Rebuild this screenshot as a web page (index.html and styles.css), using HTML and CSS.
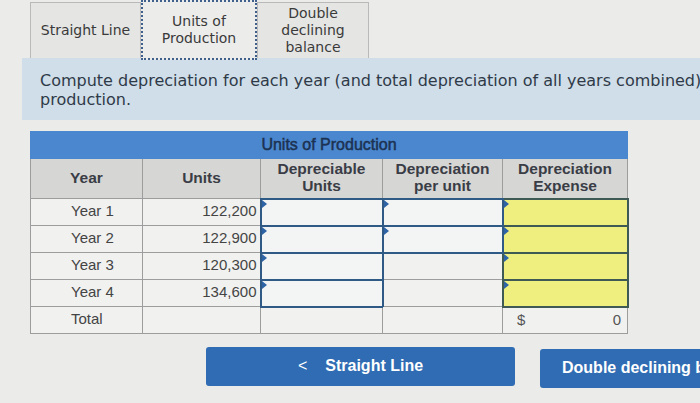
FILE: index.html
```html
<!DOCTYPE html>
<html>
<head>
<meta charset="utf-8">
<link rel="stylesheet" href="styles.css">
</head>
<body>
<div class="tabs">
  <div class="tab">Straight Line</div>
  <div class="tab active">Units of<br>Production</div>
  <div class="tab">Double<br>declining<br>balance</div>
</div>
<div class="info">Compute depreciation for each year (and total depreciation of all years combined) for units of<br>production.</div>
<table class="grid">
  <colgroup>
    <col class="c1"><col class="c2"><col class="c3"><col class="c4"><col class="c5">
  </colgroup>
  <tr class="title"><th colspan="5">Units of Production</th></tr>
  <tr class="head">
    <th>Year</th><th>Units</th><th>Depreciable<br>Units</th><th>Depreciation<br>per unit</th><th>Depreciation<br>Expense</th>
  </tr>
  <tr>
    <td class="lbl">Year 1</td><td class="num">122,200</td>
    <td class="inp"><span class="mk"></span></td><td class="inp"><span class="mk"></span></td><td class="yel"><span class="mk"></span></td>
  </tr>
  <tr>
    <td class="lbl">Year 2</td><td class="num">122,900</td>
    <td class="inp"><span class="mk"></span></td><td class="inp"><span class="mk"></span></td><td class="yel"><span class="mk"></span></td>
  </tr>
  <tr>
    <td class="lbl">Year 3</td><td class="num">120,300</td>
    <td class="inp"><span class="mk"></span></td><td></td><td class="yel"><span class="mk"></span></td>
  </tr>
  <tr>
    <td class="lbl">Year 4</td><td class="num">134,600</td>
    <td class="inp"><span class="mk"></span></td><td></td><td class="yel"><span class="mk"></span></td>
  </tr>
  <tr>
    <td class="lbl">Total</td><td></td><td></td><td></td>
    <td class="tot"><span class="dollar">$</span><span>0</span></td>
  </tr>
</table>
<div class="nav">
  <div class="btn prev"><span class="chev">&lt;</span>Straight Line</div>
  <div class="btn next">Double declining balance <span class="chev">&gt;</span></div>
</div>
</body>
</html>
```
FILE: styles.css
```css
html, body {
  margin: 0;
  padding: 0;
}
body {
  width: 700px;
  height: 403px;
  overflow: hidden;
  background: #ebebea;
  font-family: "Liberation Sans", Arial, sans-serif;
  color: #333;
}
.tabs {
  display: flex;
  align-items: flex-start;
  padding-left: 30px;
  height: 58px;
}
.tab {
  box-sizing: border-box;
  height: 56px;
  margin-top: 2px;
  background: #e5e5e4;
  border: 1px solid #b9b9b9;
  border-bottom: none;
  display: flex;
  align-items: center;
  justify-content: center;
  text-align: center;
  font-family: "DejaVu Sans", Verdana, sans-serif;
  font-size: 14px;
  line-height: 17px;
  color: #3a3a3a;
}
.tab:nth-child(1) { width: 111px; }
.tab.active {
  width: 116px;
  height: 60px;
  margin-top: 0;
  background: #ececeb;
  border: 2px dotted #3f5f8c;
  position: relative;
  z-index: 1;
}
.tab:nth-child(3) { width: 112px; }
.info {
  box-sizing: border-box;
  margin-left: 22px;
  width: 678px;
  height: 62px;
  overflow: hidden;
  white-space: nowrap;
  background: #cfdee9;
  padding: 13px 0 0 18px;
  font-family: "DejaVu Sans", Verdana, sans-serif;
  font-size: 16px;
  line-height: 19px;
  color: #2f3a48;
}
.grid {
  margin: 11px 0 0 30px;
  border-collapse: collapse;
  width: 597px;
  table-layout: fixed;
  font-size: 15px;
}
.c1 { width: 112px; }
.c2 { width: 118px; }
.c3 { width: 122px; }
.c4 { width: 120px; }
.c5 { width: 125px; }
.grid td, .grid th {
  border: 1px solid #9d9d9d;
  padding: 0;
  height: 25px;
  position: relative;
}
.grid td { background: #f1f1f0; }
.title th {
  background: #4a87cf;
  height: 26px;
  color: #1c3252;
  font-weight: normal;
  font-size: 16px;
  text-align: center;
  border-color: #4a87cf;
  -webkit-text-stroke: 0.5px #1c3252;
}
.head th {
  background: #d6d6d5;
  height: 37px;
  font-weight: bold;
  font-size: 15.5px;
  color: #3a3d45;
  line-height: 17px;
  vertical-align: middle;
  padding-bottom: 2px;
}
.head th:nth-child(3), .head th:nth-child(4), .head th:nth-child(5) {
  vertical-align: top;
  padding-top: 1px;
  padding-bottom: 0;
}
.grid td.lbl { padding: 0 0 3px 40px; color: #444; height: 22px; }
.grid td.num { text-align: right; padding: 0 3px 3px 0; color: #444; height: 22px; }
.grid td.inp {
  border: 2px solid #2f5a85;
  background: #f3f4f4;
}
.grid td.yel {
  border: 2px solid #3f5a55;
  background: #eeef7e;
}
.mk {
  position: absolute;
  left: 0;
  top: 0;
  width: 0;
  height: 0;
  border-top: 4px solid transparent;
  border-bottom: 4px solid transparent;
  border-left: 5px solid #2e64a5;
}
.tot { color: #555; }
.tot .dollar { position: absolute; left: 14px; top: 3px; }
.tot span:last-child { position: absolute; right: 6px; top: 3px; }
.nav {
  display: flex;
  margin-top: 13px;
  padding-left: 206px;
  gap: 25px;
}
.btn {
  flex: none;
  height: 39px;
  background: #2f6cb3;
  border-radius: 3px;
  color: #fff;
  font-weight: bold;
  font-size: 16px;
  display: flex;
  align-items: center;
  white-space: nowrap;
}
.prev {
  width: 309px;
  justify-content: center;
}
.prev .chev { margin-right: 18px; font-weight: normal; }
.next {
  width: 200px;
  margin-top: 2px;
  padding-left: 22px;
  box-sizing: border-box;
}
.next .chev { margin-left: 8px; }
```
